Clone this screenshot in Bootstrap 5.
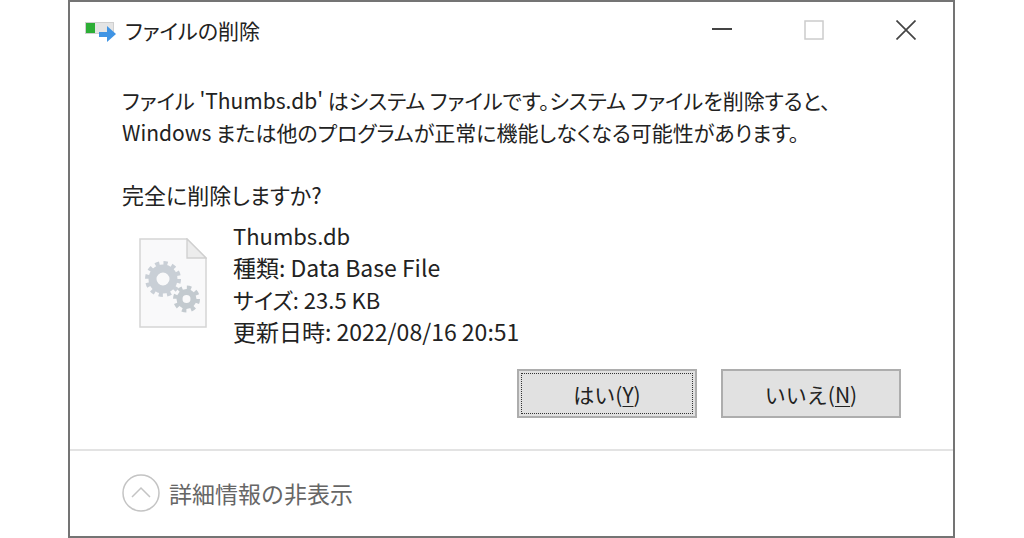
<!DOCTYPE html>
<html lang="ja">
<head>
<meta charset="utf-8">
<meta name="viewport" content="width=device-width, initial-scale=1">
<title>ファイルの削除</title>
<link rel="stylesheet" href="https://cdn.jsdelivr.net/npm/bootstrap@5.3.0/dist/css/bootstrap.min.css">
<style>
  body { font-family: "Noto Sans CJK JP", "Noto Sans", sans-serif; font-size: 21px; line-height: 32px; font-feature-settings: "palt"; color: #222; background: #fff; }
  .stage { padding: 0 69px 0 68px; }
  .dialog { border: 2px solid #747474; background: #fff; }
  .titlebar { padding: 12px 37px 0 15px; }
  .titlebar h1 { font-size: 21px; line-height: 32px; font-weight: 400; }
  .winctl { padding: 0; border: 0; background: none; width: 20px; height: 32px; line-height: 0; }
  .wincontrols { gap: 72px; }
  .message { padding: 38px 52px 0; }
  .question, .facts { font-size: 22px; }
  .question { margin: 30px 0 9px; }
  .wide { font-size: 23px; }
  .facts { padding-left: 69px; padding-bottom: 22px; gap: 26px; }
  .fileicon { margin-top: 19px; }
  .answers { padding: 0 52px 31px; gap: 24px; }
  .answer { width: 180px; height: 49px; padding: 2px; border: 2px solid #adadad; background: #e1e1e1; color: #222; }
  .answer span { display: flex; align-items: center; justify-content: center; height: 100%; }
  .answer.chosen span { outline: 1px dotted #333; outline-offset: -1px; }
  .answer u { text-decoration-thickness: 1px; text-underline-offset: 3px; }
  .details { border-top: 2px solid #e3e3e3; padding: 23px 52px; }
  .toggle { padding: 0; border: 0; background: none; color: #666; gap: 9px; font-size: 23px; }
</style>
</head>
<body>
<main class="stage min-vh-100 d-flex">
  <section class="dialog flex-fill d-flex flex-column">
    <header class="titlebar d-flex align-items-center">
      <svg width="32" height="24" viewBox="0 0 32 24" aria-hidden="true"><rect x=".5" y="4.500" width="28" height="11" fill="#e4e4e4" stroke="#cfcfcf"/><rect x="1" y="5" width="9" height="10" fill="#2cae35"/><path d="M14 14h8V8l9 8-9 8v-5h-8z" fill="#3f94e4"/></svg>
      <h1 class="mb-0 ms-2">ファイルの削除</h1>
      <div class="wincontrols d-flex ms-auto">
        <button type="button" class="winctl" aria-label="最小化"><svg width="20" height="20"><path d="M0 9h20" stroke="#444" stroke-width="2"/></svg></button>
        <button type="button" class="winctl" aria-label="最大化" disabled><svg width="20" height="20"><rect x="1" y="1" width="18" height="18" fill="none" stroke="#ccc" stroke-width="1.500"/></svg></button>
        <button type="button" class="winctl" aria-label="閉じる"><svg width="20" height="20"><path d="M.5.5l19 19M19.500.5l-19 19" stroke="#444" stroke-width="1.700"/></svg></button>
      </div>
    </header>
    <div class="message">
      <p class="mb-0">ファイル 'Thumbs.db' はシステム ファイルです。システム ファイルを削除すると、<br>Windows または他のプログラムが正常に機能しなくなる可能性があります。</p>
      <p class="question">完全に削除しますか?</p>
    </div>
    <div class="facts d-flex align-items-start">
      <svg class="fileicon" width="68" height="91" viewBox="0 0 68 91" aria-hidden="true">
        <path d="M1 1h47l19 19v69H1z" fill="#f9f9fa" stroke="#d5d5d5" stroke-width="1.500"/>
        <path d="M48 1v19h19z" fill="#ececec" stroke="#cfcfcf" stroke-width="1.300"/>
        <g fill="none" stroke="#c9cfd6"><circle cx="24" cy="41" r="10.500" stroke-width="8"/><circle cx="24" cy="41" r="15.500" stroke-width="5" stroke-dasharray="4.100 4.015"/></g>
        <g fill="none" stroke="#c3cacf"><circle cx="47.500" cy="61" r="7" stroke-width="6"/><circle cx="47.500" cy="61" r="11" stroke-width="5" stroke-dasharray="4.200 4.439"/></g>
      </svg>
      <div><div>Thumbs.db</div><div class="wide">種類: Data Base File</div><div>サイズ: 23.5 KB</div><div class="wide">更新日時: 2022/08/16 20:51</div></div>
    </div>
    <div class="answers d-flex justify-content-end">
      <button type="button" class="answer chosen"><span>はい(<u>Y</u>)</span></button>
      <button type="button" class="answer"><span>いいえ(<u>N</u>)</span></button>
    </div>
    <footer class="details flex-fill">
      <button type="button" class="toggle d-flex align-items-center" aria-expanded="true"><svg width="38" height="38" fill="none" stroke="#c4c4c4" stroke-width="1.500"><circle cx="19" cy="19" r="18"/><path d="M10 23l9-9 9 9"/></svg>詳細情報の非表示</button>
    </footer>
  </section>
</main>
<script src="https://cdn.jsdelivr.net/npm/bootstrap@5.3.0/dist/js/bootstrap.bundle.min.js"></script>
</body>
</html>
